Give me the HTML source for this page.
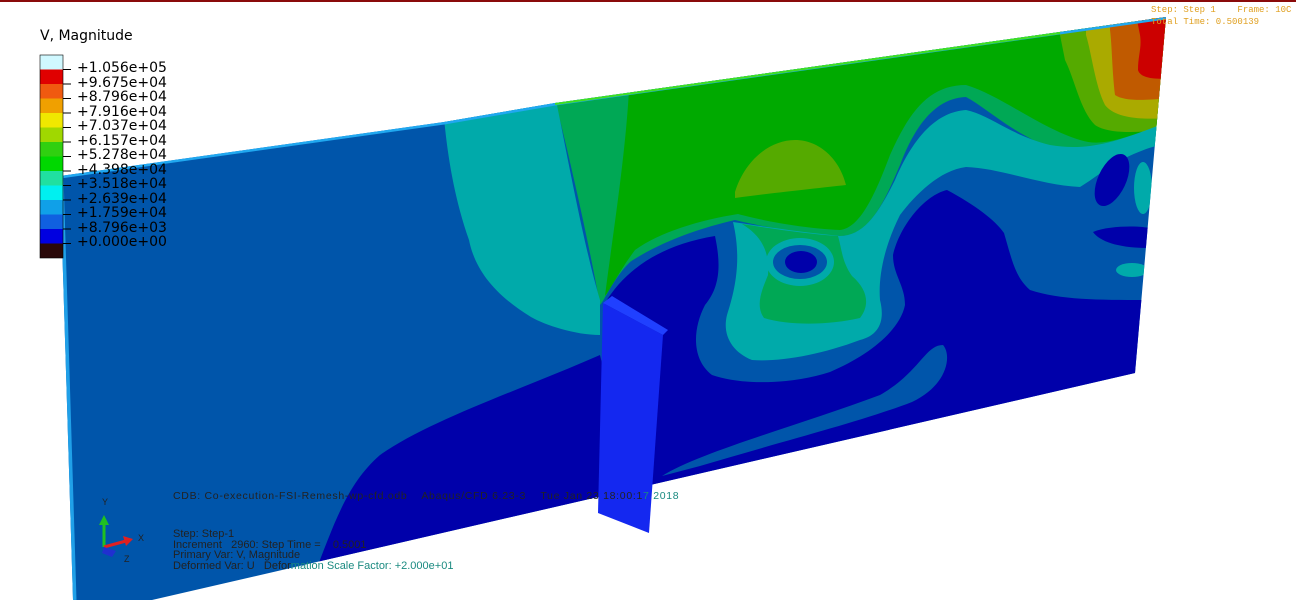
<!DOCTYPE html>
<html><head><meta charset="utf-8"><style>
html,body{margin:0;padding:0;background:#fff;width:1296px;height:600px;overflow:hidden;position:relative;font-family:"Liberation Sans",sans-serif}
.t{position:absolute;white-space:pre;}
.g{color:#1a8a80}
</style></head><body>
<svg width="1296" height="600" style="position:absolute;left:0;top:0">
<defs><clipPath id="pl"><polygon points="60,176 444,122 555,103 1166,17 1135,373 152,600 73,600"/></clipPath></defs>
<rect x="0" y="0" width="1296" height="2" fill="#8a0a0a"/>
<g clip-path="url(#pl)">
<rect x="0" y="0" width="1296" height="600" fill="#0055aa"/>
<path d="M555,100 L1170,10 L1170,140 C1130,140 1100,165 1060,150 C1020,140 990,110 966,97 C936,98 915,125 900,165 C885,200 870,236 840,236 C800,234 760,226 735,220 C700,228 660,242 630,262 C612,280 605,300 600,305 C590,250 575,180 555,100 Z" fill="#00a855"/>
<path d="M629,90 L1170,10 L1170,125 C1140,128 1110,150 1080,140 C1040,128 1000,95 966,85 C930,85 910,110 890,155 C875,195 860,228 840,230 C800,228 760,220 738,214 C700,220 660,232 635,250 C620,270 610,290 605,296 C612,240 625,160 629,90 Z" fill="#00aa00"/>
<path d="M735,192 C745,160 770,140 795,140 C820,140 840,160 846,185 C820,188 780,192 735,198 Z" fill="#55aa00"/>
<path d="M1059,30 L1170,14 L1170,130 C1140,132 1110,135 1095,125 C1080,110 1075,80 1065,60 Z" fill="#55aa00"/>
<path d="M1086,23 L1170,12 L1170,118 C1140,120 1115,118 1105,105 C1095,85 1092,55 1086,35 Z" fill="#aaaa00"/>
<path d="M1110,22 L1170,12 L1170,98 C1150,100 1125,102 1115,95 C1112,70 1112,45 1110,30 Z" fill="#c05a00"/>
<path d="M1137,20 L1170,14 L1170,78 C1155,80 1140,78 1138,70 C1138,55 1142,48 1140,35 Z" fill="#cc0000"/>
<path d="M444,118 L556,100 C570,170 585,250 600,300 L600,335 C575,335 545,325 531,317 C495,295 475,270 469,240 C455,200 448,160 444,118 Z" fill="#00aaaa"/>
<path d="M605,303 C625,270 660,245 715,236 C720,260 722,285 705,305 C692,330 692,360 712,375 C740,385 790,385 830,372 C870,355 900,330 905,305 C905,285 893,275 893,255 C900,225 925,195 947,190 C975,205 995,220 1004,233 C1012,260 1015,277 1030,290 C1060,300 1100,300 1145,300 L1135,380 L640,490 L605,490 Z" fill="#0000aa"/>
<path d="M733,222 C760,226 800,232 840,236 C865,236 880,210 895,180 C912,140 935,112 966,110 C990,115 1010,135 1050,145 C1090,152 1120,140 1160,125 L1160,145 C1120,155 1100,175 1080,187 C1040,185 1000,168 966,167 C940,170 915,195 900,215 C885,245 878,275 880,300 C885,320 880,335 860,340 C820,355 780,362 752,360 C732,352 722,335 727,315 C735,290 742,260 733,222 Z" fill="#00aaaa"/>
<path d="M742,224 C780,230 810,234 838,236 C842,250 842,262 852,276 C868,290 870,305 860,318 C830,325 790,326 764,318 C755,305 762,290 768,275 C770,250 760,235 742,224 Z" fill="#00a855"/>
<ellipse cx="800" cy="262" rx="34" ry="24" fill="#00aaaa"/>
<ellipse cx="800" cy="262" rx="27" ry="17" fill="#0055aa"/>
<ellipse cx="801" cy="262" rx="16" ry="11" fill="#0000aa"/>
<path d="M662,476 C700,452 800,425 880,395 C920,372 925,345 943,345 C952,355 948,385 912,402 C860,422 780,442 700,466 Z" fill="#0055aa"/>
<ellipse cx="1112" cy="180" rx="14" ry="28" fill="#0000aa" transform="rotate(25 1112 180)"/>
<ellipse cx="1143" cy="188" rx="9" ry="26" fill="#00aaaa"/>
<path d="M1093,232 C1110,225 1140,226 1150,228 L1148,248 C1120,248 1100,242 1093,232 Z" fill="#0000aa"/>
<ellipse cx="1132" cy="270" rx="16" ry="7" fill="#00aaaa"/>
<path d="M300,610 C330,540 340,490 380,455 C430,420 520,390 600,355 L640,520 L300,620 Z" fill="#0000aa"/>
<polyline points="60,176 444,122 555,103 1166,17" fill="none" stroke="#20a8f0" stroke-width="5"/>
<polyline points="555,103 1060,32" fill="none" stroke="#40e020" stroke-width="4"/>
<line x1="60" y1="176" x2="73" y2="600" stroke="#20a0e8" stroke-width="7"/>
</g>
<polygon points="603,303 663,335 649,533 598,513" fill="#1428f0"/>
<polygon points="603,303 612,296 668,330 663,335" fill="#2040ff"/>
<g>
<rect x="40" y="55" width="23" height="14.5" fill="#d0f8ff"/>
<rect x="40" y="69.5" width="23" height="14.5" fill="#e00000"/>
<rect x="40" y="84" width="23" height="14.5" fill="#f05a10"/>
<rect x="40" y="98.5" width="23" height="14.5" fill="#f0a000"/>
<rect x="40" y="113" width="23" height="14.5" fill="#f0e800"/>
<rect x="40" y="127.5" width="23" height="14.5" fill="#a0d800"/>
<rect x="40" y="142" width="23" height="14.5" fill="#30d010"/>
<rect x="40" y="156.5" width="23" height="14.5" fill="#00d800"/>
<rect x="40" y="171" width="23" height="14.5" fill="#20e0a0"/>
<rect x="40" y="185.5" width="23" height="14.5" fill="#00f0f0"/>
<rect x="40" y="200" width="23" height="14.5" fill="#10a0e8"/>
<rect x="40" y="214.5" width="23" height="14.5" fill="#1060e0"/>
<rect x="40" y="229" width="23" height="14.5" fill="#0000e0"/>
<rect x="40" y="243.5" width="23" height="14.5" fill="#2a0808"/>
<rect x="40" y="55" width="23" height="203" fill="none" stroke="#000" stroke-width="0.6"/>
<g stroke="#000" stroke-width="1">
<line x1="63" y1="69.5" x2="71" y2="69.5"/><line x1="63" y1="84" x2="71" y2="84"/><line x1="63" y1="98.5" x2="71" y2="98.5"/><line x1="63" y1="113" x2="71" y2="113"/><line x1="63" y1="127.5" x2="71" y2="127.5"/><line x1="63" y1="142" x2="71" y2="142"/><line x1="63" y1="156.5" x2="71" y2="156.5"/><line x1="63" y1="171" x2="71" y2="171"/><line x1="63" y1="185.5" x2="71" y2="185.5"/><line x1="63" y1="200" x2="71" y2="200"/><line x1="63" y1="214.5" x2="71" y2="214.5"/><line x1="63" y1="229" x2="71" y2="229"/><line x1="63" y1="243.5" x2="71" y2="243.5"/>
</g>
</g>
</svg>
<div class="t" style="left:40px;top:28px;font-family:'DejaVu Sans',sans-serif;font-size:14px;color:#000">V, Magnitude</div>
<div class="t" style="left:77px;top:61px;font-family:'DejaVu Sans',sans-serif;font-size:14px;line-height:14.5px;color:#000">+1.056e+05
+9.675e+04
+8.796e+04
+7.916e+04
+7.037e+04
+6.157e+04
+5.278e+04
+4.398e+04
+3.518e+04
+2.639e+04
+1.759e+04
+8.796e+03
+0.000e+00</div>
<div class="t" style="left:1151px;top:4px;font-family:'Liberation Mono',monospace;font-size:9px;line-height:12px;color:#e0a020">Step: Step 1    Frame: 10C
Total Time: 0.500139</div>
<div class="t" style="left:173px;top:490px;font-size:10.5px;letter-spacing:0.7px;color:#222">CDB: Co-execution-FSI-Remesh-wp-cfd.odb    Abaqus/CFD 6.23-3    Tue Jan 23 18:00:1<span class="g">7 2018</span></div>
<div class="t" style="left:173px;top:529px;font-size:11px;line-height:10.5px;color:#222">Step: Step-1
Increment   2960: Step Time =    0.5001
Primary Var: V, Magnitude
Deformed Var: U   Defor<span class="g">mation Scale Factor: +2.000e+01</span></div>
<svg width="60" height="70" style="position:absolute;left:90px;top:495px">
<text x="12" y="10" font-size="9" fill="#222" font-family="Liberation Sans">Y</text>
<line x1="14" y1="52" x2="14" y2="28" stroke="#20c020" stroke-width="3"/>
<polygon points="9,30 19,30 14,20" fill="#20c020"/>
<line x1="14" y1="52" x2="36" y2="46" stroke="#e02020" stroke-width="3"/>
<polygon points="33,41 43,44 36,51" fill="#e02020"/>
<text x="48" y="46" font-size="9" fill="#222" font-family="Liberation Sans">X</text>
<polygon points="14,52 26,56 22,62 12,58" fill="#2030d0"/>
<text x="34" y="67" font-size="9" fill="#222" font-family="Liberation Sans">Z</text>
</svg>
</body></html>
